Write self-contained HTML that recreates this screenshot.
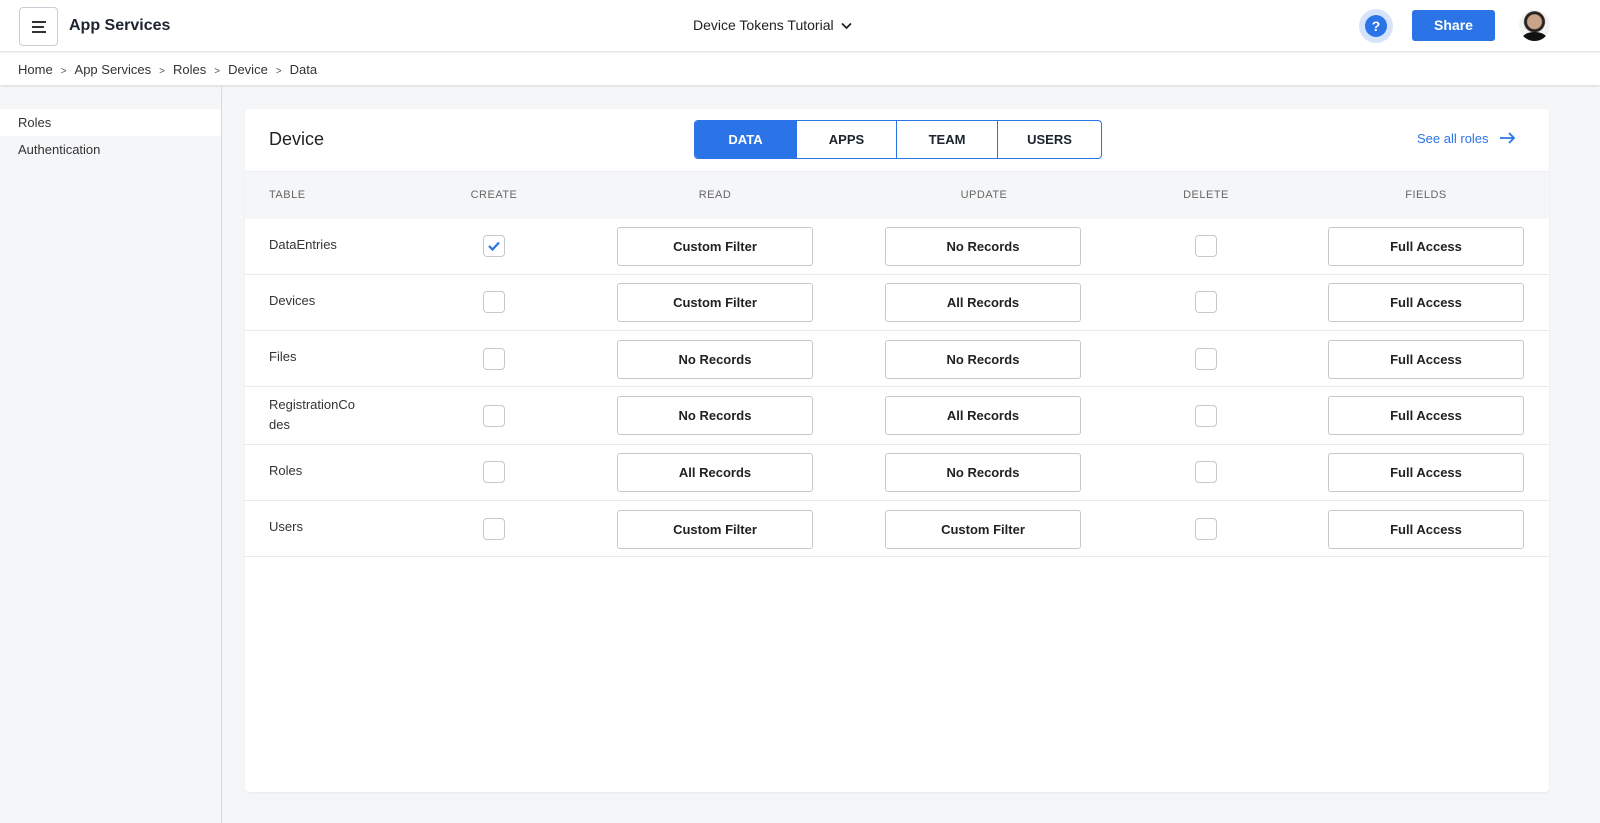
<!DOCTYPE html>
<html><head><meta charset="utf-8"><style>
*{box-sizing:border-box;margin:0;padding:0}
body{width:1600px;height:823px;overflow:hidden;background:#f5f6f8;font-family:"Liberation Sans",sans-serif;color:#1c2430;position:relative}
.hdr{position:absolute;left:0;top:0;width:1600px;height:52px;background:#fff;border-bottom:1px solid #e6e8eb}
.menu{position:absolute;left:19px;top:7px;width:39px;height:39px;border:1px solid #c9ced6;border-radius:4px}
.menu i{position:absolute;left:12px;height:1.6px;background:#333;display:block}
.title{position:absolute;left:69px;top:16px;font-size:16px;line-height:20px;font-weight:bold}
.proj{position:absolute;left:693px;top:17px;font-size:14px;color:#222}
.help{position:absolute;left:1359px;top:9px;width:34px;height:34px;border-radius:50%;background:#d6e4fb}
.help b{position:absolute;left:6px;top:6px;width:22px;height:22px;border-radius:50%;background:#2b74e8;color:#fff;font-size:14px;text-align:center;line-height:22px}
.share{position:absolute;left:1412px;top:10px;width:83px;height:31px;background:#2b74e8;border-radius:3px;color:#fff;font-weight:bold;font-size:14px;text-align:center;line-height:31px}
.av{position:absolute;left:1519px;top:10px;width:31px;height:31px;border-radius:50%;background:radial-gradient(circle at 50% 38%,#c9a488 0 7px,#2a2220 8px 10px,#f3f3f3 11px);overflow:hidden}
.av:after{content:"";position:absolute;left:3px;top:22px;width:25px;height:14px;border-radius:50% 50% 0 0;background:#111}
.bc{position:absolute;left:0;top:53px;width:1600px;height:32px;background:#fff;box-shadow:0 1px 3px rgba(0,0,0,.12);font-size:13px;color:#333;padding:9px 0 0 18px}
.bc span{color:#555;margin:0 8px;font-size:10px}
.side{position:absolute;left:0;top:86px;width:222px;height:737px;border-right:1px solid #d7dbe0}
.side div{height:27px;line-height:27px;padding-left:18px;font-size:13px;color:#333}
.card{position:absolute;left:245px;top:109px;width:1304px;height:683px;background:#fff;border-radius:4px;box-shadow:0 1px 2px rgba(0,0,0,.06)}
.dev{position:absolute;left:24px;top:20px;font-size:18px;color:#222}
.tabs{position:absolute;left:449px;top:11px;width:408px;height:39px;border:1px solid #2b74e8;border-radius:4px;display:flex;overflow:hidden}
.tabs div{height:100%;text-align:center;line-height:37px;font-size:13px;font-weight:bold;border-left:1px solid #2b74e8}
.tabs div:first-child{border:none;background:#2b74e8;color:#fff}
.see{position:absolute;left:1172px;top:22px;font-size:13px;color:#2b74e8}
.th{position:absolute;left:0;top:62px;width:1304px;height:48px;background:#f5f6f8;border-top:1px solid #eceef1}
.th span,.row span{position:absolute;font-size:11px;color:#666;letter-spacing:.5px;top:17px}
.c{transform:translateX(-50%)}
.row{position:absolute;left:0;width:1304px;border-bottom:1px solid #e8eaed}
.row .n{position:absolute;left:24px;font-size:13px;color:#333;line-height:20px}
.cb{position:absolute;width:22px;height:22px;border:1px solid #c4c9d0;border-radius:4px}
.btn{position:absolute;width:196px;height:39px;border:1px solid #c4c9d0;border-radius:3px;text-align:center;line-height:37px;font-size:13px;font-weight:bold;color:#222}
</style></head><body>
<div class="hdr">
<div class="menu"><i style="top:13px;width:14px"></i><i style="top:18px;width:12px"></i><i style="top:23px;width:14px"></i></div>
<div class="title">App Services</div>
<div class="proj">Device Tokens Tutorial &nbsp;<svg width="11" height="8" viewBox="0 0 11 8"><path d="M1 1.5l4.5 4.5 4.5-4.5" stroke="#222" stroke-width="1.8" fill="none"/></svg></div>
<div class="help"><b>?</b></div>
<div class="share">Share</div>
<div class="av"></div>
</div>
<div class="bc">Home<span>&gt;</span>App Services<span>&gt;</span>Roles<span>&gt;</span>Device<span>&gt;</span>Data</div>
<div class="side"><div style="margin-top:23px;background:#fff">Roles</div><div>Authentication</div></div>
<div class="card">
<div class="dev">Device</div>
<div class="tabs"><div style="width:101px">DATA</div><div style="width:100px">APPS</div><div style="width:101px">TEAM</div><div style="flex:1">USERS</div></div>
<div class="see">See all roles &nbsp;&nbsp;<svg width="17" height="12" viewBox="0 0 17 12" style="vertical-align:-1px"><path d="M1 6h14M10 1l5 5-5 5" stroke="#2b74e8" stroke-width="1.8" fill="none"/></svg></div>
<div class="th"><span style="left:24px">TABLE</span><span class="c" style="left:249px">CREATE</span><span class="c" style="left:470px">READ</span><span class="c" style="left:739px">UPDATE</span><span class="c" style="left:961px">DELETE</span><span class="c" style="left:1181px">FIELDS</span></div>
<div class="row" style="top:110px;height:56px"><div class="n" style="top:16px">DataEntries</div><div class="cb" style="left:238px;top:16px"><svg width="20" height="20" viewBox="0 0 20 20"><path d="M5 10l3.5 3.5L15 6.5" stroke="#2b74e8" stroke-width="2.2" fill="none"/></svg></div><div class="btn" style="left:372px;top:8px">Custom Filter</div><div class="btn" style="left:640px;top:8px">No Records</div><div class="cb" style="left:950px;top:16px"></div><div class="btn" style="left:1083px;top:8px">Full Access</div></div>
<div class="row" style="top:166px;height:56px"><div class="n" style="top:16px">Devices</div><div class="cb" style="left:238px;top:16px"></div><div class="btn" style="left:372px;top:8px">Custom Filter</div><div class="btn" style="left:640px;top:8px">All Records</div><div class="cb" style="left:950px;top:16px"></div><div class="btn" style="left:1083px;top:8px">Full Access</div></div>
<div class="row" style="top:222px;height:56px"><div class="n" style="top:16px">Files</div><div class="cb" style="left:238px;top:17px"></div><div class="btn" style="left:372px;top:9px">No Records</div><div class="btn" style="left:640px;top:9px">No Records</div><div class="cb" style="left:950px;top:17px"></div><div class="btn" style="left:1083px;top:9px">Full Access</div></div>
<div class="row" style="top:278px;height:58px"><div class="n" style="top:8px">RegistrationCo<br>des</div><div class="cb" style="left:238px;top:18px"></div><div class="btn" style="left:372px;top:9px">No Records</div><div class="btn" style="left:640px;top:9px">All Records</div><div class="cb" style="left:950px;top:18px"></div><div class="btn" style="left:1083px;top:9px">Full Access</div></div>
<div class="row" style="top:336px;height:56px"><div class="n" style="top:16px">Roles</div><div class="cb" style="left:238px;top:16px"></div><div class="btn" style="left:372px;top:8px">All Records</div><div class="btn" style="left:640px;top:8px">No Records</div><div class="cb" style="left:950px;top:16px"></div><div class="btn" style="left:1083px;top:8px">Full Access</div></div>
<div class="row" style="top:392px;height:56px"><div class="n" style="top:16px">Users</div><div class="cb" style="left:238px;top:17px"></div><div class="btn" style="left:372px;top:9px">Custom Filter</div><div class="btn" style="left:640px;top:9px">Custom Filter</div><div class="cb" style="left:950px;top:17px"></div><div class="btn" style="left:1083px;top:9px">Full Access</div></div>
</div>
</body></html>
